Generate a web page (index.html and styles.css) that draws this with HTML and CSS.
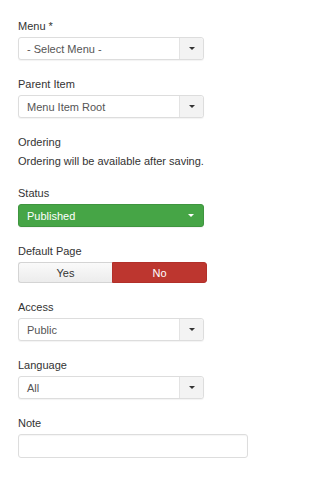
FILE: index.html
```html
<!DOCTYPE html>
<html lang="en">
<head>
<meta charset="utf-8">
<title>Menu item options</title>
<link rel="stylesheet" href="styles.css">
</head>
<body>
<form class="form">
  <div class="group">
    <label class="label">Menu *</label>
    <div class="select">
      <span class="select-text">- Select Menu -</span>
      <span class="select-btn"><span class="caret"></span></span>
    </div>
  </div>
  <div class="group">
    <label class="label">Parent Item</label>
    <div class="select">
      <span class="select-text">Menu Item Root</span>
      <span class="select-btn"><span class="caret"></span></span>
    </div>
  </div>
  <div class="group">
    <label class="label">Ordering</label>
    <div class="info">Ordering will be available after saving.</div>
  </div>
  <div class="group">
    <label class="label">Status</label>
    <div class="select select-green">
      <span class="select-text">Published</span>
      <span class="caret caret-white"></span>
    </div>
  </div>
  <div class="group">
    <label class="label">Default Page</label>
    <div class="toggle">
      <span class="toggle-yes">Yes</span>
      <span class="toggle-no">No</span>
    </div>
  </div>
  <div class="group">
    <label class="label">Access</label>
    <div class="select">
      <span class="select-text">Public</span>
      <span class="select-btn"><span class="caret"></span></span>
    </div>
  </div>
  <div class="group">
    <label class="label">Language</label>
    <div class="select">
      <span class="select-text">All</span>
      <span class="select-btn"><span class="caret"></span></span>
    </div>
  </div>
  <div class="group">
    <label class="label">Note</label>
    <div class="input"></div>
  </div>
</form>
</body>
</html>
```
FILE: styles.css
```css
* { box-sizing: border-box; }
html, body { margin: 0; padding: 0; background: #fff; }
body {
  font-family: "Liberation Sans", Arial, sans-serif;
  font-size: 11px;
  color: #333;
  width: 265px;
}
.form {
  display: flex;
  flex-direction: column;
  padding: 18px 0 0 18px;
}
.group {
  display: flex;
  flex-direction: column;
  margin-bottom: 16px;
}
.label {
  display: block;
  line-height: 16px;
  height: 16px;
  margin-bottom: 3px;
  color: #333;
}
.info {
  line-height: 16px;
  color: #333;
}
.select {
  display: flex;
  align-items: stretch;
  width: 186px;
  height: 23px;
  border: 1px solid #ddd;
  border-radius: 3px;
  background: #fff;
  box-shadow: 0 1px 1px rgba(0,0,0,0.05);
}
.select-text {
  flex: 1;
  display: flex;
  align-items: center;
  padding-left: 8px;
  color: #555;
  font-size: 11px;
}
.select-btn {
  width: 24px;
  display: flex;
  align-items: center;
  justify-content: center;
  background: #f3f3f3;
  border-left: 1px solid #e3e3e3;
  border-radius: 0 3px 3px 0;
}
.caret {
  width: 0;
  height: 0;
  border-left: 3px solid transparent;
  border-right: 3px solid transparent;
  border-top: 3px solid #333;
}
.select-green {
  background: #46a546;
  border-color: #3f953f;
  align-items: center;
  padding-right: 9px;
}
.select-green .select-text { color: #fff; }
.caret-white { border-top-color: #fff; }
.toggle {
  display: flex;
  width: 189px;
  height: 21px;
  border-radius: 3px;
}
.toggle-yes, .toggle-no {
  display: flex;
  align-items: center;
  justify-content: center;
  font-size: 11px;
}
.toggle-yes {
  width: 94px;
  color: #333;
  background: linear-gradient(#fafafa, #ececec);
  border: 1px solid #d4d4d4;
  border-right: none;
  border-radius: 3px 0 0 3px;
}
.toggle-no {
  flex: 1;
  color: #fff;
  background: #bd362f;
  border: 1px solid #b2302a;
  border-radius: 0 3px 3px 0;
}
.input {
  width: 230px;
  height: 24px;
  border: 1px solid #ddd;
  border-radius: 3px;
  background: #fff;
  box-shadow: inset 0 1px 1px rgba(0,0,0,0.04);
}
```
